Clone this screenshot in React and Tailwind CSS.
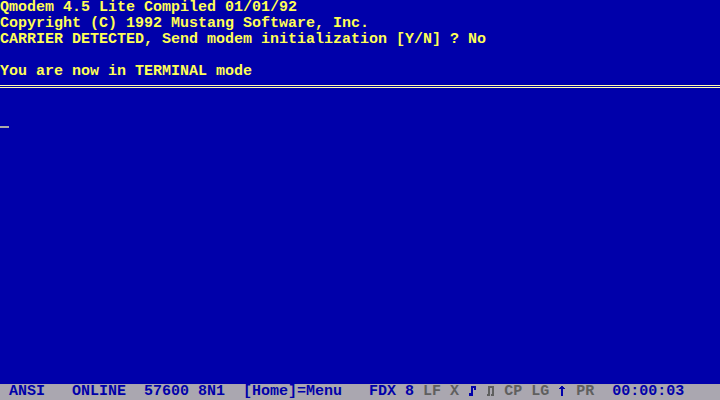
import React from "react";

const Note1 = ({ color }) => (
  <svg width="9" height="16" viewBox="0 0 9 16" className="inline-block align-top">
    <g fill={color}>
      <rect x="3" y="2" width="2" height="10" />
      <rect x="3" y="2" width="5" height="2" />
      <rect x="6" y="2" width="2" height="4" />
      <rect x="1" y="9" width="4" height="3" />
    </g>
  </svg>
);

const Note2 = ({ color }) => (
  <svg width="9" height="16" viewBox="0 0 9 16" className="inline-block align-top">
    <g fill={color}>
      <rect x="2" y="2" width="6" height="2" />
      <rect x="2" y="2" width="2" height="10" />
      <rect x="6" y="2" width="2" height="10" />
      <rect x="1" y="10" width="3" height="2" />
      <rect x="5" y="10" width="3" height="2" />
    </g>
  </svg>
);

const Arrow = ({ color }) => (
  <svg width="9" height="16" viewBox="0 0 9 16" className="inline-block align-top">
    <g fill={color}>
      <rect x="3" y="2" width="2" height="10" />
      <rect x="2" y="3" width="4" height="2" />
      <rect x="1" y="4" width="6" height="1" />
    </g>
  </svg>
);

export default function App() {
  const B = "#0000aa";
  const G = "#5f5f5f";
  return (
    <div
      className="w-[720px] h-[400px] bg-[#0000aa] flex flex-col overflow-hidden text-[15px] leading-[16px] font-bold"
      style={{ fontFamily: '"Liberation Mono", "DejaVu Sans Mono", monospace' }}
    >
      <div className="whitespace-pre text-[#ffff55]">
        <div className="h-[16px]">Qmodem 4.5 Lite Compiled 01/01/92</div>
        <div className="h-[16px]">Copyright (C) 1992 Mustang Software, Inc.</div>
        <div className="h-[16px]">CARRIER DETECTED, Send modem initialization [Y/N] ? No</div>
        <div className="h-[16px]"> </div>
        <div className="h-[16px]">You are now in TERMINAL mode</div>
      </div>
      <div className="mt-[5px] h-[1px] bg-[#ffffaa]" />
      <div className="mt-[1px] h-[1px] bg-[#ffffaa]" />
      <div className="mt-[38px] w-[9px] h-[2px] bg-[#aaaaaa]" />
      <div className="flex-1" />
      <div className="h-[16px] bg-[#aaa7b0] whitespace-pre text-[#0000aa] flex items-start">
        <span> ANSI   ONLINE  57600 8N1  [Home]=Menu   FDX 8 </span>
        <span className="text-[#5f5f5f]">LF X </span>
        <Note1 color={B} />
        <span> </span>
        <Note2 color={G} />
        <span> </span>
        <span className="text-[#5f5f5f]">CP LG </span>
        <Arrow color={B} />
        <span> </span>
        <span className="text-[#5f5f5f]">PR</span>
        <span>  00:00:03</span>
      </div>
    </div>
  );
}
